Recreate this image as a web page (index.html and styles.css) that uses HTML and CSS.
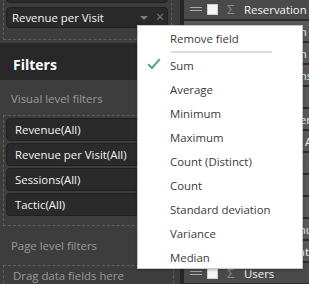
FILE: index.html
```html
<!DOCTYPE html>
<html>
<head>
<meta charset="utf-8">
<link rel="stylesheet" href="styles.css">
</head>
<body>
<div class="app">
  <div class="left">
    <div class="wells">
      <div class="well-box">
        <div class="pill"></div>
        <div class="pill field-pill"><span class="pill-text">Revenue per Visit</span><span class="arrow"></span><span class="close">×</span></div>
      </div>
    </div>
    <div class="filters-head">Filters</div>
    <div class="filters-body">
      <div class="label first">Visual level filters</div>
      <div class="drop">
        <div class="pill filter-pill">Revenue(All)</div>
        <div class="pill filter-pill">Revenue per Visit(All)</div>
        <div class="pill filter-pill">Sessions(All)</div>
        <div class="pill filter-pill">Tactic(All)</div>
      </div>
      <div class="label second">Page level filters</div>
      <div class="drop drag">Drag data fields here</div>
    </div>
  </div>
  <div class="divider"></div>
  <div class="right">
    <div class="row dark"><span class="handle"></span><span class="check"></span><span class="sigma">Σ</span><span class="name">Reservation</span></div>
    <div class="row"><span class="handle"></span><span class="check"></span><span class="sigma">Σ</span><span class="name">Reservation Count</span></div>
    <div class="row"><span class="handle"></span><span class="check"></span><span class="sigma">Σ</span><span class="name">Reservation Rev</span></div>
    <div class="row"><span class="handle"></span><span class="check"></span><span class="sigma">Σ</span><span class="name">Reservations</span></div>
    <div class="row"><span class="handle"></span><span class="check"></span><span class="sigma">Σ</span><span class="name">Revenue</span></div>
    <div class="row"><span class="handle"></span><span class="check"></span><span class="sigma">Σ</span><span class="name">Revenue per Visit</span></div>
    <div class="row"><span class="handle"></span><span class="check"></span><span class="sigma">Σ</span><span class="name">Room Rate Avg</span></div>
    <div class="row"><span class="handle"></span><span class="check"></span><span class="sigma">Σ</span><span class="name">Rooms</span></div>
    <div class="row"><span class="handle"></span><span class="check"></span><span class="sigma">Σ</span><span class="name">Sessions</span></div>
    <div class="row"><span class="handle"></span><span class="check"></span><span class="sigma">Σ</span><span class="name">Stays</span></div>
    <div class="row"><span class="handle"></span><span class="check"></span><span class="sigma">Σ</span><span class="name">Total Revenue</span></div>
    <div class="row"><span class="handle"></span><span class="check"></span><span class="sigma">Σ</span><span class="name">Tour Operator</span></div>
    <div class="row dark"><span class="handle"></span><span class="check"></span><span class="sigma">Σ</span><span class="name">Users</span></div>
  </div>
  <div class="menu">
    <div class="item">Remove field</div>
    <div class="sep"></div>
    <div class="item checked"><svg class="tick" width="14" height="12" viewBox="0 0 14 12"><path d="M1.2 6.2 L5 10 L12.8 1.2" fill="none" stroke="#5c9f86" stroke-width="2"/></svg>Sum</div>
    <div class="item">Average</div>
    <div class="item">Minimum</div>
    <div class="item">Maximum</div>
    <div class="item">Count (Distinct)</div>
    <div class="item">Count</div>
    <div class="item">Standard deviation</div>
    <div class="item">Variance</div>
    <div class="item last">Median</div>
  </div>
</div>
</body>
</html>
```
FILE: styles.css
```css
html, body {
  margin: 0;
  padding: 0;
  width: 309px;
  height: 284px;
  overflow: hidden;
  background: #3d3d3d;
  font-family: "Open Sans", "Noto Sans", sans-serif;
}
.app {
  position: relative;
  display: flex;
  width: 309px;
  height: 284px;
  overflow: hidden;
}
.left {
  width: 180px;
  flex: none;
  display: flex;
  flex-direction: column;
  background: #3d3d3d;
}
.wells {
  height: 43px;
  overflow: hidden;
  flex: none;
}
.well-box {
  margin: -12px 0 0 3px;
  width: 162px;
  height: 39px;
  border: 1px dashed #5e5e5e;
  padding: 0 3px 11px 2px;
  display: flex;
  flex-direction: column;
  justify-content: flex-end;
  gap: 4px;
  box-sizing: content-box;
}
.pill {
  height: 21px;
  flex: none;
  background: #2a2a2a;
  border: 1px solid #202020;
  border-radius: 4px;
  box-sizing: border-box;
  color: #f4f4f4;
  font-size: 11.4px;
  display: flex;
  align-items: center;
}
.field-pill {
  padding-left: 5px;
  padding-bottom: 1px;
}
.pill-text {
  flex: 1;
}
.arrow {
  width: 0;
  height: 0;
  border-left: 4px solid transparent;
  border-right: 4px solid transparent;
  border-top: 4px solid #7c7c7c;
  margin-right: 8px;
  margin-top: 2px;
  flex: none;
}
.close {
  color: #7c7c7c;
  font-size: 14px;
  margin-right: 3px;
  line-height: 1;
  flex: none;
}
.filters-head {
  height: 37px;
  flex: none;
  background: #282828;
  color: #ffffff;
  font-weight: 700;
  font-size: 14px;
  display: flex;
  align-items: center;
  padding: 5px 0 0 13px;
  box-sizing: border-box;
}
.filters-body {
  flex: 1;
  background: #3d3d3d;
}
.label {
  color: #9a9a9a;
  font-size: 11.4px;
  line-height: 16px;
  padding-left: 11px;
}
.label.first {
  margin-top: 11px;
}
.label.second {
  margin-top: 12px;
}
.drop {
  margin: 8px 0 0 3px;
  width: 165px;
  border: 1px dashed #5e5e5e;
  padding: 2px 2px 9px;
  display: flex;
  flex-direction: column;
  gap: 2px;
}
.filter-pill {
  height: 23px;
  padding-left: 8px;
  padding-bottom: 1px;
}
.drag {
  margin-top: 11px;
  height: 30px;
  padding: 2px 0 0 9px;
  width: 160px;
  color: #9a9a9a;
  font-size: 11.4px;
  line-height: 16px;
  display: block;
}
.divider {
  width: 4px;
  flex: none;
  background: #262626;
}
.right {
  flex: 1;
  display: flex;
  flex-direction: column;
  gap: 2px;
  margin-top: -1px;
  background: #2c2c2c;
  overflow: hidden;
}
.row {
  height: 20px;
  flex: none;
  background: #595959;
  display: flex;
  align-items: center;
  padding-left: 6px;
  white-space: nowrap;
}
.row.dark {
  background: #4a4a4a;
}
.handle {
  width: 12px;
  height: 4px;
  border-top: 1px solid #a8a8a8;
  border-bottom: 1px solid #a8a8a8;
  box-sizing: border-box;
  flex: none;
  margin-top: -1px;
}
.check {
  width: 11px;
  height: 11px;
  background: #f4f4f4;
  border: 1px solid #cfcfcf;
  box-sizing: border-box;
  margin-left: 5px;
  flex: none;
}
.sigma {
  color: #8c8c8c;
  font-size: 13px;
  margin-left: 9px;
  width: 9px;
  flex: none;
  line-height: 1;
}
.name {
  color: #f4f4f4;
  font-size: 11.4px;
  margin-left: 8px;
}
.menu {
  position: absolute;
  left: 137px;
  top: 25px;
  width: 164px;
  background: #ffffff;
  border: 1px solid #c6c6c6;
  padding-top: 1px;
  box-shadow: 0 1px 3px rgba(0,0,0,0.25);
}
.item {
  position: relative;
  height: 24px;
  line-height: 23px;
  padding-left: 32px;
  color: #3a3a3a;
  font-size: 11.4px;
}
.item.last {
  height: 22px;
}
.sep {
  height: 2px;
  margin: 0 30px 1px 33px;
  background: #dcdcdc;
}
.tick {
  position: absolute;
  left: 9px;
  top: 4px;
}
```
